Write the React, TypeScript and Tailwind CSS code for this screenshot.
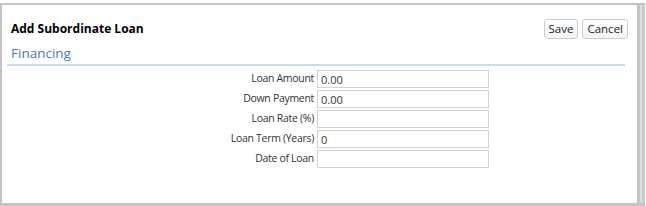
const rows = [
  { label: "Loan Amount", value: "0.00" },
  { label: "Down Payment", value: "0.00" },
  { label: "Loan Rate (%)", value: "" },
  { label: "Loan Term (Years)", value: "0" },
  { label: "Date of Loan", value: "" },
];

export default function App() {
  return (
    <div className="h-[206px] w-[646px] bg-white pt-[3px] pr-[1px] font-['Open_Sans',sans-serif] text-[#333]">
      <div className="flex h-[203px] border-t-2 border-l-2 border-b-[3px] border-[#c4c4c4]">
        <div className="flex flex-1 flex-col px-[5px]">
          <div className="flex items-center justify-between pt-[14px]">
            <h1 className="pl-[4px] text-[12px] font-bold text-black">Add Subordinate Loan</h1>
            <div className="flex gap-[4px] pr-[4px]">
              <button className="h-[20px] rounded-[3px] border border-[#c9ced6] bg-gradient-to-b from-white to-[#f2f4f7] px-[4px] text-[11.5px] leading-none text-[#222]">
                Save
              </button>
              <button className="h-[20px] rounded-[3px] border border-[#c9ced6] bg-gradient-to-b from-white to-[#f2f4f7] px-[4px] text-[11.5px] leading-none text-[#222]">
                Cancel
              </button>
            </div>
          </div>
          <h2 className="mt-[4px] mr-[7px] border-b-2 border-[#c6dcf2] pl-[4px] pb-[1px] text-[13.5px] leading-[20px] text-[#4a78ae]">
            Financing
          </h2>
          <div className="mt-[4px] flex flex-col gap-[2px]">
            {rows.map((r) => (
              <div key={r.label} className="flex h-[18px] items-center">
                <label className="w-[310px] pr-[3px] text-right text-[10.5px] tracking-[-0.3px]">{r.label}</label>
                <input
                  readOnly
                  value={r.value}
                  className="h-[18px] w-[172px] border border-[#d2d2d8] px-[3px] text-[11px] text-[#333] outline-none"
                />
              </div>
            ))}
          </div>
        </div>
        <div className="flex w-[8px]">
          <div className="w-[3px] bg-[#c4c4c4]" />
          <div className="w-[2px] bg-[#d7dde6]" />
          <div className="w-[3px] bg-[#c9ccd2]" />
        </div>
      </div>
    </div>
  );
}
